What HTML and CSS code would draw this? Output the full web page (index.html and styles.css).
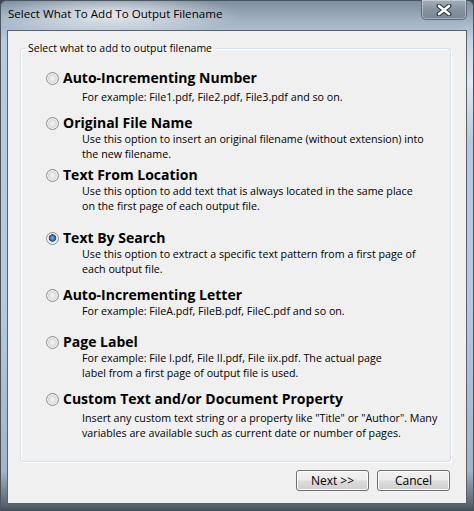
FILE: index.html
```html
<!DOCTYPE html>
<html>
<head>
<meta charset="utf-8">
<link rel="stylesheet" href="styles.css">
</head>
<body>
<div class="window">
  <div class="titlebar">
    <span class="title">Select What To Add To Output Filename</span>
    <div class="close">
      <svg width="16" height="12" viewBox="0 0 16 12">
        <path d="M3 2 L13 10 M13 2 L3 10" stroke="#2b3440" stroke-width="4.8" stroke-linecap="round"/>
        <path d="M3 2 L13 10 M13 2 L3 10" stroke="#ffffff" stroke-width="2.6" stroke-linecap="round"/>
      </svg>
    </div>
  </div>
  <div class="client">
    <fieldset class="group">
      <legend>Select what to add to output filename</legend>
      <div class="options">
        <div class="option gap-0">
          <div class="head"><span class="radio"></span><span class="label">Auto-Incrementing Number</span></div>
          <div class="desc wide">For example: File1.pdf, File2.pdf, File3.pdf and so on.</div>
        </div>
        <div class="option gap-9">
          <div class="head"><span class="radio"></span><span class="label">Original File Name</span></div>
          <div class="desc">Use this option to insert an original filename (without extension) into<br>the new filename.</div>
        </div>
        <div class="option gap-4">
          <div class="head"><span class="radio"></span><span class="label">Text From Location</span></div>
          <div class="desc">Use this option to add text that is always located in the same place<br>on the first page of each output file.</div>
        </div>
        <div class="option gap-15">
          <div class="head"><span class="radio checked"></span><span class="label">Text By Search</span></div>
          <div class="desc">Use this option to extract a specific text pattern from a first page of<br>each output file.</div>
        </div>
        <div class="option gap-9">
          <div class="head"><span class="radio"></span><span class="label">Auto-Incrementing Letter</span></div>
          <div class="desc">For example: FileA.pdf, FileB.pdf, FileC.pdf and so on.</div>
        </div>
        <div class="option gap-14">
          <div class="head"><span class="radio"></span><span class="label">Page Label</span></div>
          <div class="desc">For example: File I.pdf, File II.pdf, File iix.pdf. The actual page<br>label from a first page of output file is used.</div>
        </div>
        <div class="option gap-9">
          <div class="head"><span class="radio"></span><span class="label">Custom Text and/or Document Property</span></div>
          <div class="desc wide">Insert any custom text string or a property like "Title" or "Author". Many<br>variables are available such as current date or number of pages.</div>
        </div>
      </div>
    </fieldset>
    <div class="buttons">
      <button class="btn">Next &gt;&gt;</button>
      <button class="btn">Cancel</button>
    </div>
  </div>
</div>
</body>
</html>
```
FILE: styles.css
```css
html, body {
  margin: 0;
  padding: 0;
  background: #3e454d;
}
body {
  width: 474px;
  height: 511px;
  overflow: hidden;
  font-family: "Open Sans", "Noto Sans", sans-serif;
}
.window {
  width: 474px;
  height: 511px;
  box-sizing: border-box;
  border-radius: 6px 6px 0 0;
  background:
    radial-gradient(ellipse 130px 22px at 110px 14px, rgba(255,255,255,0.75), rgba(255,255,255,0) 100%),
    radial-gradient(ellipse 30px 60px at 470px 80px, rgba(255,255,255,0.6), rgba(255,255,255,0) 100%),
    linear-gradient(180deg, #7e8e9f 0px, #a4b5c6 22px, #b8cadd 40px, #b6cade 300px, #a2b4c6 470px, #56616c 505px, #3d4650 511px);
  display: flex;
  flex-direction: column;
  border: 1px solid #4a5560;
  border-bottom: none;
}
.titlebar {
  height: 29px;
  display: flex;
  align-items: flex-start;
  flex: none;
}
.title {
  font-size: 11.6px;
  color: #000;
  margin: 5px 0 0 7px;
  line-height: 16px;
}
.close {
  margin-left: auto;
  margin-right: 6px;
  margin-top: -1px;
  width: 46px;
  height: 20px;
  box-sizing: border-box;
  border: 1px solid #5d6977;
  border-top: none;
  border-radius: 0 0 5px 5px;
  background: linear-gradient(180deg, #a4afbb 0%, #8592a0 50%, #77869a 100%);
  box-shadow: inset 0 0 0 1px rgba(255,255,255,0.35);
  display: flex;
  align-items: center;
  justify-content: center;
}
.client {
  margin: 0 6px 0 6px;
  height: 474px;
  box-sizing: border-box;
  border: 1px solid #56626e;
  background: #f0f0f0;
  display: flex;
  flex-direction: column;
}
.group {
  margin: 10px 15px 0 12px;
  padding: 0 0 20px 4px;
  border: 1px solid #d5dfe5;
  border-radius: 3px;
  box-shadow: inset 1px 1px 0 #ffffff, 1px 1px 0 #ffffff;
}
.group legend {
  font-size: 10.5px;
  line-height: 15px;
  padding: 0 3px;
  color: #000;
}
.options {
  padding-left: 21px;
  padding-top: 13px;
  display: flex;
  flex-direction: column;
}
.gap-0 { margin-top: 0; }
.gap-4 { margin-top: 4px; }
.gap-9 { margin-top: 9px; }
.gap-14 { margin-top: 14px; }
.gap-15 { margin-top: 15px; }
.head {
  display: flex;
  align-items: center;
  height: 18px;
}
.radio {
  width: 13px;
  height: 13px;
  box-sizing: border-box;
  border-radius: 50%;
  border: 1px solid #8f8f8f;
  background: radial-gradient(circle at 50% 50%, #f6f6f6 0%, #dadada 55%, #cbcbcb 62%, #f2f2f2 100%);
  box-shadow: inset 0 0 0 1px #f4f4f4;
  margin-right: 4px;
  flex: none;
}
.radio.checked {
  background: radial-gradient(circle at 50% 45%, #7fb8ea 0%, #2c6cb4 30%, #1c4a86 42%, #dfe3e8 50%, #f2f2f2 100%);
}
.label {
  font-size: 14px;
  font-weight: bold;
  color: #000;
  line-height: 18px;
  white-space: nowrap;
}
.desc {
  font-size: 10.7px;
  line-height: 15px;
  padding-left: 36px;
  color: #000;
  white-space: nowrap;
}
.desc.wide {
  margin-top: 3px;
}
.buttons {
  display: flex;
  justify-content: flex-end;
  gap: 8px;
  margin: 8px 16px 0 0;
}
.btn {
  width: 73px;
  height: 21px;
  box-sizing: border-box;
  border: 1px solid #707070;
  border-radius: 3px;
  background: linear-gradient(180deg, #f2f2f2 0%, #ebebeb 48%, #dddddd 52%, #cfcfcf 100%);
  box-shadow: inset 0 0 0 1px #fcfcfc;
  font-family: "Open Sans", "Noto Sans", sans-serif;
  font-size: 12px;
  color: #000;
  padding: 0;
  line-height: 18px;
}
```
